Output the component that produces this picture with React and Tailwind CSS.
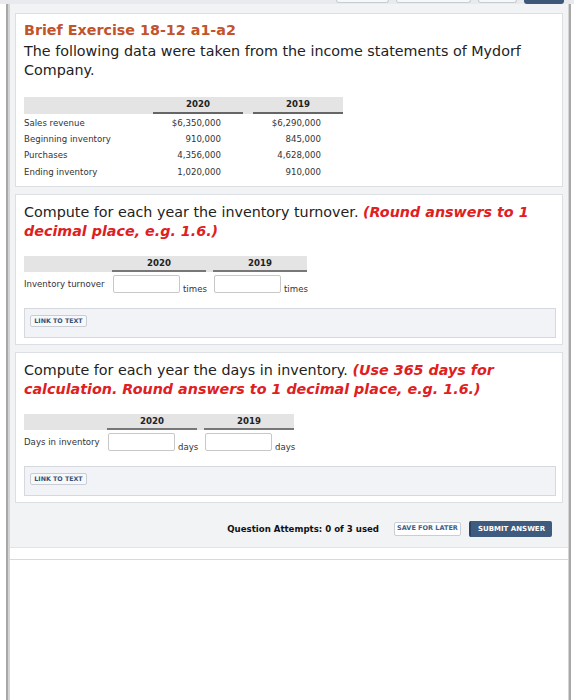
import React from "react";

const rows = [
  ["Sales revenue", "$6,350,000", "$6,290,000"],
  ["Beginning inventory", "910,000", "845,000"],
  ["Purchases", "4,356,000", "4,628,000"],
  ["Ending inventory", "1,020,000", "910,000"],
];

const LinkBox = () => (
  <div className="mt-[15px] h-[30px] bg-[#f1f3f6] border border-[#d5d9df] pl-[5px] pt-[6px]">
    <button className="w-[57px] h-[12px] bg-[#f7f8fa] border border-[#c9ced6] rounded-[2px] text-[6.3px] leading-none font-bold text-[#34527a] flex items-center justify-center">
      LINK TO TEXT
    </button>
  </div>
);

// answer row with header + two inputs
const AnswerTable = ({ label, unit, labelW, colW }) => (
  <div className="mt-[15.5px]">
    <div className="flex w-fit bg-[#e4e4e4] h-[16px] text-[8.6px] font-bold text-[#222]">
      <div style={{ width: labelW }} />
      <div style={{ width: colW }} className="border-b-2 border-[#777] flex items-center justify-center">
        2020
      </div>
      <div className="w-[7px]" />
      <div style={{ width: colW }} className="border-b-2 border-[#777] flex items-center justify-center">
        2019
      </div>
    </div>
    <div className="flex items-center mt-[3px] text-[8.6px] text-[#333]">
      <div style={{ width: labelW }}>{label}</div>
      <div style={{ width: colW }} className="flex items-end">
        <input className="w-[67px] h-[18px] bg-white border border-[#c8c8c8] rounded-[2px] ml-[1px]" />
        <span className="ml-[3px] leading-none">{unit}</span>
      </div>
      <div className="w-[7px]" />
      <div style={{ width: colW }} className="flex items-end">
        <input className="w-[67px] h-[18px] bg-white border border-[#c8c8c8] rounded-[2px] ml-[1px]" />
        <span className="ml-[3px] leading-none">{unit}</span>
      </div>
    </div>
  </div>
);

export default function App() {
  return (
    <div className="w-[574px] h-[700px] bg-white overflow-hidden font-['DejaVu_Sans',sans-serif] flex flex-col">
      {/* top toolbar, cut off */}
      <div className="h-[4px] bg-[#e8eaed] flex justify-end gap-[7px] pr-[10px]">
        <div className="w-[53px] h-[3px] bg-[#f6f7f9] border-x border-b border-[#c9cdd3] rounded-b-[3px]" />
        <div className="w-[75px] h-[3px] bg-[#f6f7f9] border-x border-b border-[#c9cdd3] rounded-b-[3px]" />
        <div className="w-[39px] h-[3px] bg-[#f6f7f9] border-x border-b border-[#c9cdd3] rounded-b-[3px]" />
        <div className="w-[40px] h-[4px] bg-[#3d5879] rounded-b-[3px]" />
      </div>

      <div className="flex-1 ml-[6px] mr-[3px] border-l-2 border-r-2 border-[#a8a8a8]">
        <div className="h-full border-l-2 border-r border-[#d4d4d4] flex flex-col">
          <div className="bg-[#f2f3f5] px-[5px] pt-[9px] border-b border-[#e2e4e8]">
            {/* card 1 */}
            <div className="bg-white border border-[#dcdfe3] pl-[8px] pr-2 pt-[7px] pb-[6px]">
              <h1 className="text-[14.3px] leading-[18px] font-bold text-[#c2532b]">
                Brief Exercise 18-12 a1-a2
              </h1>
              <p className="mt-[3px] text-[14.3px] leading-[19px] text-[#222]">
                The following data were taken from the income statements of Mydorf Company.
              </p>
              <div className="mt-[17px] w-[319px]">
                <div className="flex bg-[#e4e4e4] h-[17px] mb-[1px] text-[8.6px] font-bold text-[#222]">
                  <div className="w-[129px]" />
                  <div className="w-[90px] border-b-2 border-[#666] flex items-center justify-center">2020</div>
                  <div className="w-[10px]" />
                  <div className="w-[90px] border-b-2 border-[#666] flex items-center justify-center">2019</div>
                </div>
                {rows.map((r) => (
                  <div key={r[0]} className="flex items-center h-[16.33px] text-[8.6px] text-[#333]">
                    <div className="w-[129px]">{r[0]}</div>
                    <div className="w-[90px] text-right pr-[22px]">{r[1]}</div>
                    <div className="w-[10px]" />
                    <div className="w-[90px] text-right pr-[22px]">{r[2]}</div>
                  </div>
                ))}
              </div>
            </div>

            {/* card 2 */}
            <div className="mt-[7px] bg-white border border-[#dcdfe3] pl-[8px] pr-[6px] pt-[7.5px] pb-[6px]">
              <p className="text-[14.3px] leading-[19px] text-[#222]">
                Compute for each year the inventory turnover.{" "}
                <span className="font-bold italic text-[#e0201e]">
                  (Round answers to 1 decimal place, e.g. 1.6.)
                </span>
              </p>
              <AnswerTable label="Inventory turnover" unit="times" labelW={88} colW={94} />
              <LinkBox />
            </div>

            {/* card 3 */}
            <div className="mt-[7px] bg-white border border-[#dcdfe3] pl-[8px] pr-[6px] pt-[7.5px] pb-[6px]">
              <p className="text-[14.3px] leading-[19px] text-[#222]">
                Compute for each year the days in inventory.{" "}
                <span className="font-bold italic text-[#e0201e]">
                  (Use 365 days for calculation. Round answers to 1 decimal place, e.g. 1.6.)
                </span>
              </p>
              <AnswerTable label="Days in inventory" unit="days" labelW={83} colW={90} />
              <LinkBox />
            </div>

            {/* footer */}
            <div className="h-[44px] pt-[18px] pr-[11px] flex justify-end items-start">
              <div className="flex items-center h-[16px]">
                <span className="text-[8.6px] font-bold text-[#111]">Question Attempts: 0 of 3 used</span>
                <button className="ml-[15px] w-[67px] h-[14px] bg-white border border-[#c9ced6] rounded-[2px] text-[6.5px] font-bold text-[#3e5f8a] flex items-center justify-center">
                  SAVE FOR LATER
                </button>
                <button className="ml-[8px] w-[83px] h-[16px] bg-[#3f5b7e] border-l-2 border-[#2a4465] rounded-[2px] text-[7px] font-bold text-white flex items-center justify-center">
                  SUBMIT ANSWER
                </button>
              </div>
            </div>
          </div>
          <div className="h-[12px] bg-white border-b border-[#d9d9d9]" />
          <div className="flex-1 bg-white" />
        </div>
      </div>
    </div>
  );
}
